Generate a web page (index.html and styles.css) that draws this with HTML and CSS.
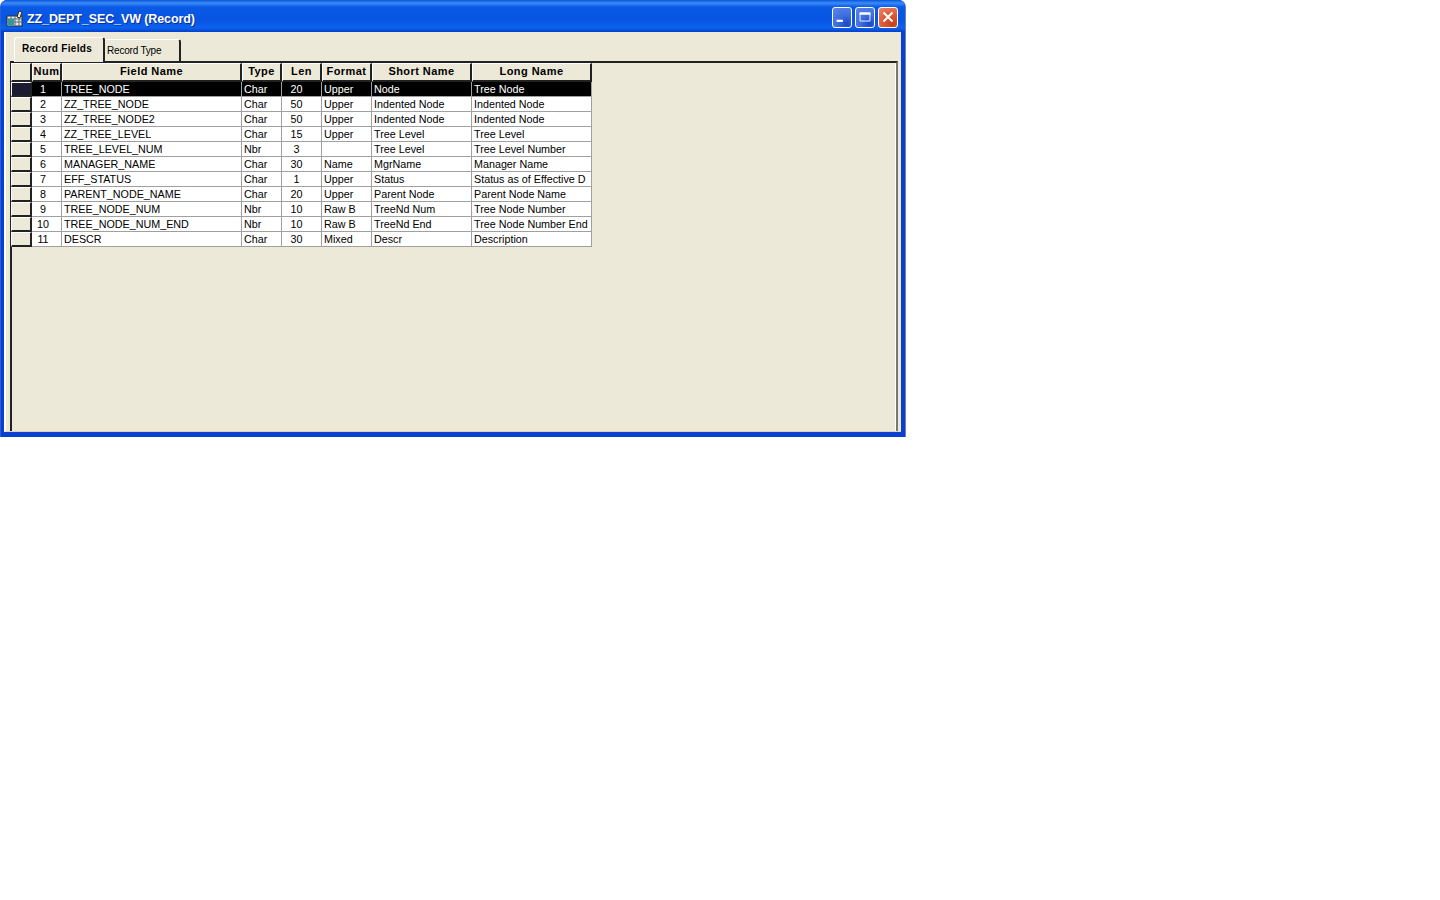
FILE: index.html
```html
<!DOCTYPE html>
<html lang="en">
<head>
<meta charset="utf-8">
<title>ZZ_DEPT_SEC_VW (Record)</title>
<link rel="stylesheet" href="styles.css">
</head>
<body>
<div class="window">
  <header class="titlebar">
    <svg class="app-icon" width="18" height="18" viewBox="0 0 18 18">
      <rect x="1" y="6" width="15" height="10" fill="#e8e8e0" stroke="#26303c"/>
      <path d="M1 9h15M1 12h15M5 6v10M9 6v10M13 6v10" stroke="#5a6a78" fill="none"/>
      <rect x="2" y="9" width="6" height="6" fill="#2f9a9a"/>
      <path d="M11 7l2-6 3 1-2 6z" fill="#f4e6b0" stroke="#26303c"/>
    </svg>
    <span class="title">ZZ_DEPT_SEC_VW (Record)</span>
    <div class="controls">
      <button class="ctl"><svg width="20" height="20" viewBox="0 0 20 20"><rect x="4" y="13" width="7" height="2.500" fill="#fff"/></svg></button>
      <button class="ctl"><svg width="20" height="20" viewBox="0 0 20 20"><path d="M4.500 5.500h11v9h-11z" fill="none" stroke="#fff"/><rect x="4" y="5" width="12" height="2.500" fill="#fff"/></svg></button>
      <button class="ctl close"><svg width="20" height="20" viewBox="0 0 20 20"><path d="M5 5l10 10M15 5L5 15" stroke="#fff" stroke-width="2.200" fill="none"/></svg></button>
    </div>
  </header>
  <main class="client">
    <nav class="tabs">
      <div class="tab active">Record Fields</div>
      <div class="tab">Record Type</div>
    </nav>
    <section class="panel">
      <table class="grid">
        <colgroup>
          <col class="c-h"><col class="c-num"><col class="c-field"><col class="c-type"><col class="c-len"><col class="c-fmt"><col class="c-short"><col class="c-long">
        </colgroup>
        <thead>
          <tr><th></th><th>Num</th><th>Field Name</th><th>Type</th><th>Len</th><th>Format</th><th>Short Name</th><th>Long Name</th></tr>
        </thead>
        <tbody>
          <tr class="sel"><th></th><td class="n">1</td><td>TREE_NODE</td><td>Char</td><td class="l">20</td><td>Upper</td><td>Node</td><td>Tree Node</td></tr>
          <tr><th></th><td class="n">2</td><td>ZZ_TREE_NODE</td><td>Char</td><td class="l">50</td><td>Upper</td><td>Indented Node</td><td>Indented Node</td></tr>
          <tr><th></th><td class="n">3</td><td>ZZ_TREE_NODE2</td><td>Char</td><td class="l">50</td><td>Upper</td><td>Indented Node</td><td>Indented Node</td></tr>
          <tr><th></th><td class="n">4</td><td>ZZ_TREE_LEVEL</td><td>Char</td><td class="l">15</td><td>Upper</td><td>Tree Level</td><td>Tree Level</td></tr>
          <tr><th></th><td class="n">5</td><td>TREE_LEVEL_NUM</td><td>Nbr</td><td class="l">3</td><td></td><td>Tree Level</td><td>Tree Level Number</td></tr>
          <tr><th></th><td class="n">6</td><td>MANAGER_NAME</td><td>Char</td><td class="l">30</td><td>Name</td><td>MgrName</td><td>Manager Name</td></tr>
          <tr><th></th><td class="n">7</td><td>EFF_STATUS</td><td>Char</td><td class="l">1</td><td>Upper</td><td>Status</td><td>Status as of Effective D</td></tr>
          <tr><th></th><td class="n">8</td><td>PARENT_NODE_NAME</td><td>Char</td><td class="l">20</td><td>Upper</td><td>Parent Node</td><td>Parent Node Name</td></tr>
          <tr><th></th><td class="n">9</td><td>TREE_NODE_NUM</td><td>Nbr</td><td class="l">10</td><td>Raw B</td><td>TreeNd Num</td><td>Tree Node Number</td></tr>
          <tr><th></th><td class="n">10</td><td>TREE_NODE_NUM_END</td><td>Nbr</td><td class="l">10</td><td>Raw B</td><td>TreeNd End</td><td>Tree Node Number End</td></tr>
          <tr><th></th><td class="n">11</td><td>DESCR</td><td>Char</td><td class="l">30</td><td>Mixed</td><td>Descr</td><td>Description</td></tr>
        </tbody>
      </table>
    </section>
  </main>
</div>
</body>
</html>
```
FILE: styles.css
```css
html, body { margin: 0; padding: 0; background: #fff; }
body { width: 1440px; height: 900px; overflow: hidden; font-family: "Liberation Sans", Arial, sans-serif; }
* { box-sizing: border-box; }

.window {
  width: 906px;
  height: 437px;
  display: flex;
  flex-direction: column;
  background: #0a3fd0;
  border-radius: 7px 7px 0 0;
  border-right: 1px solid #6f7fb8;
  border-left: 1px solid #2a5fd8;
  padding: 0 4px 5px 3px;
}

.titlebar {
  height: 32px;
  margin: 0 -4px 0 -3px;
  padding: 5px 6px 0 5px;
  display: flex;
  align-items: center;
  border-radius: 7px 7px 0 0;
  background: linear-gradient(#0a53de 0, #3a8cf6 3px, #0a5ae6 7px, #0755e2 20px, #0b62ee 28px, #0640c8 32px);
}
.app-icon { flex: none; margin-right: 3px; }
.title {
  color: #fff;
  font: bold 12.500px "Liberation Sans", Arial, sans-serif;
  letter-spacing: -0.1px;
  text-shadow: 1px 1px 0 #0a2f9a;
}
.controls { margin-left: auto; margin-right: 1px; margin-top: -3px; display: flex; gap: 3px; }
.ctl {
  width: 20px;
  height: 21px;
  padding: 0;
  border: 1px solid #fff;
  border-radius: 3px;
  background: radial-gradient(circle at 75% 85%, #1a48c8 0, #3f6fe0 45%, #5b86e6 100%);
  display: flex;
  align-items: center;
  justify-content: center;
}
.ctl.close { background: radial-gradient(circle at 75% 85%, #c8401a 0, #e0603c 55%, #e88a6a 100%); }

.client {
  flex: 1;
  display: flex;
  flex-direction: column;
  background: #ece9d8;
  border-left: 2px solid #fff;
  padding: 5px 3px 0 4px;
  border-bottom: 1px solid #d8d4c0;
  min-height: 0;
}

.tabs { height: 24px; display: flex; align-items: flex-end; padding-left: 4px; font-size: 10px; color: #000; }
.tab {
  width: 76px;
  height: 22px;
  padding: 5px 0 0 2px;
  background: #ece9d8;
  border-top: 1px solid #fff;
  border-right: 2px solid #222;
  border-radius: 0 3px 0 0;
  letter-spacing: -0.2px;
  white-space: nowrap;
}
.tab.active {
  width: 91px;
  height: 25px;
  margin-bottom: -1px;
  padding: 5px 0 0 7px;
  font-weight: bold;
  letter-spacing: 0.3px;
  border-left: 1px solid #fff;
  border-radius: 3px 3px 0 0;
  position: relative;
  z-index: 1;
}

.panel {
  flex: 1;
  border-top: 2px solid #222;
  border-left: 2px solid #222;
  border-right: 2px solid #777;
  box-shadow: inset -1px 0 0 #fff;
  padding: 0;
}

.grid {
  border-collapse: separate;
  border-spacing: 0;
  table-layout: fixed;
  width: 581px;
  margin-left: -1px;
  font-size: 10.750px;
  color: #000;
}
.c-h { width: 21px; }
.c-num { width: 30px; }
.c-field { width: 180px; }
.c-type { width: 40px; }
.c-len { width: 40px; }
.c-fmt { width: 50px; }
.c-short { width: 100px; }
.c-long { width: 120px; }

.grid thead th {
  height: 19px;
  padding: 0 0 2px;
  text-align: center;
  font-size: 11px;
  font-weight: bold;
  letter-spacing: 0.45px;
  background: #ece9d8;
  border-top: 1px solid #fff;
  border-left: 1px solid #fff;
  border-right: 2px solid #222;
  border-bottom: 2px solid #222;
  white-space: nowrap;
  overflow: hidden;
}
.grid tbody th {
  height: 15px;
  padding: 0;
  background: #ece9d8;
  border-top: 1px solid #fff;
  border-left: 1px solid #fff;
  border-right: 2px solid #222;
  border-bottom: 2px solid #222;
}
.grid td {
  height: 15px;
  padding: 0 0 0 2px;
  line-height: 14px;
  background: #fff;
  border-right: 1px solid #a0a0a0;
  border-bottom: 1px solid #a0a0a0;
  white-space: nowrap;
  overflow: hidden;
}
.grid td.n { text-align: center; padding: 0 7px 0 0; }
.grid td.l { text-align: center; padding: 0 10px 0 0; }
.grid tr.sel td { background: #000; color: #fff; }
.grid tr.sel th { background: #1a1a30; }
```
